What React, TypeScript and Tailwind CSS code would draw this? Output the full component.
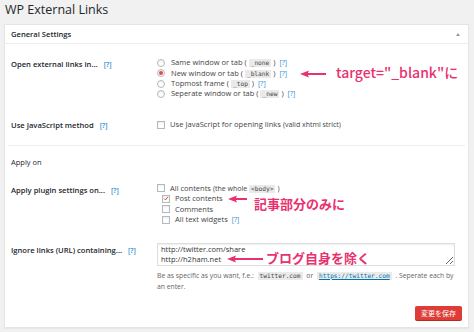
import React from 'react'

const Help = ({ ml = 'ml-[6px]' }: { ml?: string }) => (
  <span className={`${ml} text-[7px] text-[#2e8ecf]`}>[?]</span>
)

const Code = ({ children }: { children: React.ReactNode }) => (
  <code className="mx-[2px] inline-block bg-[#eaeaea] px-[2px] font-['DejaVu_Sans_Mono',monospace] text-[6.2px] leading-[8px] text-[#444]">
    {children}
  </code>
)

const Radio = ({ checked }: { checked?: boolean }) => (
  <span className="flex h-[8px] w-[8px] shrink-0 items-center justify-center rounded-full border border-[#b4b9be] bg-white shadow-[inset_0_1px_2px_rgba(0,0,0,0.08)]">
    {checked && <span className="h-[4px] w-[4px] rounded-full bg-[#e14d43]" />}
  </span>
)

const Check = ({ checked }: { checked?: boolean }) => (
  <span className="flex h-[8px] w-[8px] shrink-0 items-center justify-center border border-[#b4b9be] bg-white shadow-[inset_0_1px_2px_rgba(0,0,0,0.08)]">
    {checked && (
      <svg width="7" height="7" viewBox="0 0 10 10">
        <path d="M2 5.2 L4.2 7.4 L8.2 2.4" fill="none" stroke="#dd3d36" strokeWidth="1.6" />
      </svg>
    )}
  </span>
)

const Arrow = ({ x, y, len }: { x: number; y: number; len: number }) => (
  <svg
    className="absolute"
    style={{ left: x, top: y - 4 }}
    width={len}
    height={8}
    viewBox={`0 0 ${len} 8`}
  >
    <polygon points="0,4 9,0.5 7.5,4 9,7.5" fill="#e8316e" />
    <rect x="7" y="3" width={len - 7} height="2" fill="#e8316e" />
  </svg>
)

const Label = ({ children, pt }: { children: React.ReactNode; pt: string }) => (
  <div className={`w-[146px] shrink-0 text-[7.6px] font-semibold leading-[10px] text-[#23282d] ${pt}`}>
    {children}
  </div>
)

export default function App() {
  return (
    <div className="relative h-[332px] w-[474px] overflow-hidden bg-[#f1f1f1] font-['Open_Sans',sans-serif] text-[#444]">
      <h1 className="h-[24px] pl-[5px] text-[12.5px] leading-[19px] font-normal text-[#23282d]">
        WP External Links
      </h1>

      <div className="ml-[4px] w-[465px] border border-[#e5e5e5] bg-white shadow-[0_1px_1px_rgba(0,0,0,0.04)]">
        <div className="flex h-[19px] items-center justify-between border-b border-[#eeeeee] pl-[6px] pr-[8px]">
          <span className="pt-[1px] text-[7.6px] font-semibold text-[#23282d]">General Settings</span>
          <span className="h-0 w-0 border-x-[2.5px] border-b-[3px] border-x-transparent border-b-[#999]" />
        </div>

        <div className="px-[6px] pb-[7px]">
          {/* Open external links */}
          <div className="mt-[14px] flex">
            <Label pt="pt-[1px]">
              Open external links in...
              <Help />
            </Label>
            <div className="text-[7.5px]">
              {[
                ['Same window or tab (', '_none', false],
                ['New window or tab (', '_blank', true],
                ['Topmost frame (', '_top', false],
                ['Seperate window or tab (', '_new', false],
              ].map(([text, code, checked]) => (
                <div key={code as string} className="flex h-[10.3px] items-center gap-[6px]">
                  <Radio checked={checked as boolean} />
                  <span className="whitespace-nowrap">
                    {text as string}
                    <Code>{code as string}</Code>)
                    <Help ml="ml-[4px]" />
                  </span>
                </div>
              ))}
            </div>
          </div>

          {/* JavaScript */}
          <div className="mt-[21px] flex">
            <Label pt="pt-0">
              Use JavaScript method
              <Help />
            </Label>
            <div className="flex h-[10px] items-center gap-[5px] text-[7.6px]">
              <Check />
              <span className="whitespace-nowrap">
                Use JavaScript for opening links <span className="text-[7px]">(valid xhtml strict)</span>
              </span>
            </div>
          </div>

          <div className="-mx-[3px] mt-[14px] h-px bg-[#eeeeee]" />

          <div className="mt-[10.5px] h-[10px] text-[7.5px] leading-[10px] text-[#23282d]">Apply on</div>

          {/* Apply plugin settings */}
          <div className="mt-[16.5px] flex">
            <Label pt="pt-[2px]">
              Apply plugin settings on...
              <Help />
            </Label>
            <div className="text-[7.5px]">
              <div className="flex h-[10.5px] items-center gap-[5px]">
                <Check />
                <span className="whitespace-nowrap">
                  All contents <span className="text-[7px]">(the whole</span>
                  <Code>&lt;body&gt;</Code>
                  <span className="text-[7px]">)</span>
                </span>
              </div>
              <div className="ml-[5px]">
                <div className="flex h-[10.5px] items-center gap-[5px]">
                  <Check checked />
                  <span>Post contents</span>
                </div>
                <div className="flex h-[10.5px] items-center gap-[5px]">
                  <Check />
                  <span>Comments</span>
                </div>
                <div className="flex h-[10.5px] items-center gap-[5px]">
                  <Check />
                  <span className="whitespace-nowrap">
                    All text widgets
                    <Help ml="ml-[4px]" />
                  </span>
                </div>
              </div>
            </div>
          </div>

          {/* Ignore links */}
          <div className="mt-[18px] flex">
            <Label pt="pt-[2px]">
              Ignore links (URL) containing...
              <Help />
            </Label>
            <div className="w-[298px]">
              <textarea
                readOnly
                defaultValue={'http://twitter.com/share\nhttp://h2ham.net'}
                className="block h-[23px] w-[298px] overflow-hidden border border-[#dddddd] bg-white px-[3px] pt-[1px] text-[7.5px] leading-[9.5px] text-[#333] shadow-[inset_0_1px_2px_rgba(0,0,0,0.07)] outline-none"
              />
              <p className="mt-[3.5px] whitespace-nowrap text-[6.8px] leading-[11px] text-[#666]">
                Be as specific as you want, f.e.: <Code>twitter.com</Code> or{' '}
                <Code>
                  <span className="text-[#0073aa] underline">https://twitter.com</span>
                </Code>{' '}
                . Seperate each by
                <br />
                an enter.
              </p>
            </div>
          </div>

          <div className="mt-[14.5px] flex justify-end">
            <button className="h-[14px] w-[47px] rounded-[2px] bg-[#dd3d36] font-['Noto_Sans_CJK_JP',sans-serif] text-[7px] leading-[14px] text-white shadow-[0_1px_0_#ba281e]">
              変更を保存
            </button>
          </div>
        </div>
      </div>

      {/* annotations */}
      <Arrow x={300} y={74} len={26} />
      <div className="absolute left-[336px] top-[63px] font-['Noto_Sans_CJK_JP',sans-serif] text-[14px] leading-[18px] font-medium whitespace-nowrap text-[#e8316e]">
        target="_blank"に
      </div>
      <Arrow x={228} y={199} len={19} />
      <div className="absolute left-[254px] top-[195px] font-['Noto_Sans_CJK_JP',sans-serif] text-[13px] leading-[18px] font-bold whitespace-nowrap text-[#e8316e]">
        記事部分のみに
      </div>
      <Arrow x={227} y={259} len={36} />
      <div className="absolute left-[266px] top-[249px] font-['Noto_Sans_CJK_JP',sans-serif] text-[13px] leading-[18px] font-bold whitespace-nowrap text-[#e8316e]">
        ブログ自身を除く
      </div>
    </div>
  )
}
